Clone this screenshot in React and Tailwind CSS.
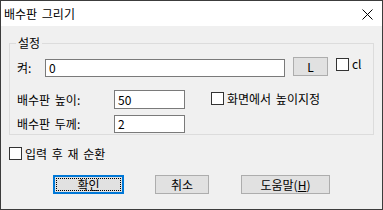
export default function App() {
  return (
    <div className="w-[383px] h-[210px] border border-[#3c3c3c] bg-[#f0f0f0] flex flex-col font-['Noto_Sans_CJK_KR',sans-serif] text-[12px] leading-[16px] text-black [word-spacing:2px]">
      <div className="h-[25px] shrink-0 bg-white flex items-center justify-between pl-[3px] pr-[9px]">
        <span>배수판 그리기</span>
        <svg width="11" height="11" viewBox="0 0 11 11" className="mt-[1px]">
          <path d="M0.5 0.5 L10.5 10.5 M10.5 0.5 L0.5 10.5" stroke="#000" strokeWidth="1" />
        </svg>
      </div>

      <div className="px-[8px] flex flex-col">
        {/* 설정 그룹 */}
        <div className="relative mt-[17px] h-[92px] border border-[#dcdcdc] pt-[13px] pl-[7px] flex flex-col">
          <span className="absolute -top-[9px] left-[6px] px-[2px] bg-[#f0f0f0] leading-[16px]">설정</span>

          <div className="flex items-start h-[20px]">
            <span className="w-[28px] leading-[19px] mt-[1px]">켜:</span>
            <div className="mt-[2px] h-[18px] w-[240px] border border-[#7a7a7a] bg-white pl-[3px] leading-[16px]">0</div>
            <div className="ml-[8px] w-[35px] h-[19px] border border-[#adadad] bg-[#e1e1e1] flex items-center justify-center">L</div>
            <div className="ml-[8px] mt-[1px] w-[13px] h-[13px] border border-[#333333] bg-white" />
            <span className="ml-[3px] leading-[14px]">cl</span>
          </div>

          <div className="flex items-start mt-[13px]">
            <span className="w-[97px] leading-[19px]">배수판 높이:</span>
            <div className="h-[19px] w-[71px] border border-[#7a7a7a] bg-white pl-[3px] leading-[17px]">50</div>
            <div className="ml-[26px] mt-[2px] w-[13px] h-[13px] border border-[#333333] bg-white" />
            <span className="ml-[3px] leading-[16px] mt-[1px]">화면에서 높이지정</span>
          </div>

          <div className="flex items-start mt-[6px]">
            <span className="w-[97px] leading-[18px]">배수판 두께:</span>
            <div className="h-[18px] w-[71px] border border-[#7a7a7a] bg-white pl-[3px] leading-[16px]">2</div>
          </div>
        </div>

        {/* 입력 후 재 순환 */}
        <div className="flex items-center mt-[12px] h-[13px]">
          <div className="w-[13px] h-[13px] border border-[#333333] bg-white" />
          <span className="ml-[3px]">입력 후 재 순환</span>
        </div>

        {/* 버튼 */}
        <div className="flex mt-[15px] pl-[44px]">
          <div className="w-[71px] h-[19px] border-2 border-[#0078d7] bg-[#e1e1e1] p-[1px]">
            <div className="h-full border border-dotted border-black flex items-center justify-center leading-[13px]">확인</div>
          </div>
          <div className="ml-[31px] w-[54px] h-[19px] border border-[#adadad] bg-[#e1e1e1] flex items-center justify-center">취소</div>
          <div className="ml-[32px] w-[89px] h-[19px] border border-[#adadad] bg-[#e1e1e1] flex items-center justify-center">
            도움말(<span className="underline">H</span>)
          </div>
        </div>
      </div>
    </div>
  );
}
